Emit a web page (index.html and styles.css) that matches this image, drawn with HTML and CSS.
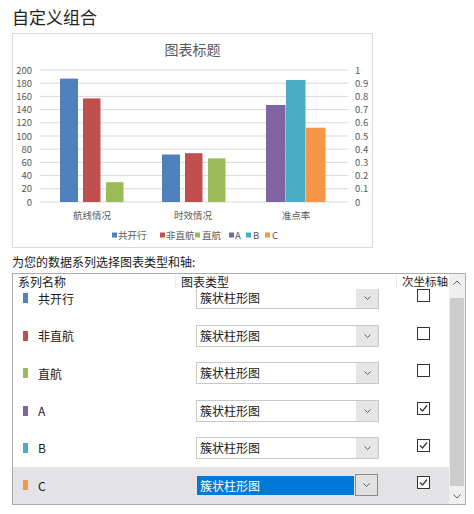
FILE: index.html
```html
<!DOCTYPE html>
<html lang="zh-CN">
<head>
  <meta charset="UTF-8" />
  <title>自定义组合</title>
  <link rel="stylesheet" href="styles.css">
</head>
<body>
  <h1 class="title">自定义组合</h1>

  <div class="chart">
    <svg width="359" height="213" viewBox="0 0 359 213">
      <text class="chart-title" x="179.5" y="21">图表标题</text>

      <g class="grid">
        <line x1="27" x2="335" y1="36" y2="36" />
        <line x1="27" x2="335" y1="49.2" y2="49.2" />
        <line x1="27" x2="335" y1="62.4" y2="62.4" />
        <line x1="27" x2="335" y1="75.6" y2="75.6" />
        <line x1="27" x2="335" y1="88.8" y2="88.8" />
        <line x1="27" x2="335" y1="102" y2="102" />
        <line x1="27" x2="335" y1="115.2" y2="115.2" />
        <line x1="27" x2="335" y1="128.4" y2="128.4" />
        <line x1="27" x2="335" y1="141.6" y2="141.6" />
        <line x1="27" x2="335" y1="154.8" y2="154.8" />
        <line x1="27" x2="335" y1="168" y2="168" />
      </g>

      <g class="axis-left">
        <text x="19" y="39.5">200</text>
        <text x="19" y="52.7">180</text>
        <text x="19" y="65.9">160</text>
        <text x="19" y="79.1">140</text>
        <text x="19" y="92.3">120</text>
        <text x="19" y="105.5">100</text>
        <text x="19" y="118.7">80</text>
        <text x="19" y="131.9">60</text>
        <text x="19" y="145.1">40</text>
        <text x="19" y="158.3">20</text>
        <text x="19" y="171.5">0</text>
      </g>

      <g class="axis-right">
        <text x="342" y="39.5">1</text>
        <text x="342" y="52.7">0.9</text>
        <text x="342" y="65.9">0.8</text>
        <text x="342" y="79.1">0.7</text>
        <text x="342" y="92.3">0.6</text>
        <text x="342" y="105.5">0.5</text>
        <text x="342" y="118.7">0.4</text>
        <text x="342" y="131.9">0.3</text>
        <text x="342" y="145.1">0.2</text>
        <text x="342" y="158.3">0.1</text>
        <text x="342" y="171.5">0</text>
      </g>

      <!-- 航线情况 -->
      <rect class="c-blue" x="47" y="44.6" width="18" height="123.4" />
      <rect class="c-red" x="70" y="64.4" width="17.5" height="103.6" />
      <rect class="c-green" x="93" y="148.2" width="17.5" height="19.8" />
      <!-- 时效情况 -->
      <rect class="c-blue" x="149" y="120.5" width="18" height="47.5" />
      <rect class="c-red" x="172" y="119.2" width="17.5" height="48.8" />
      <rect class="c-green" x="195" y="124.4" width="17.5" height="43.6" />
      <!-- 准点率 (secondary axis) -->
      <rect class="c-purple" x="253" y="71" width="19.5" height="97" />
      <rect class="c-cyan" x="273" y="46" width="19.5" height="122" />
      <rect class="c-orange" x="293" y="93.7" width="19.5" height="74.3" />

      <g class="category">
        <text x="79" y="185">航线情况</text>
        <text x="180" y="185">时效情况</text>
        <text x="283" y="185">准点率</text>
      </g>

      <g class="legend">
        <rect class="c-blue" x="99" y="198.5" width="5" height="5" />
        <text x="105" y="205">共开行</text>
        <rect class="c-red" x="147" y="198.5" width="5" height="5" />
        <text x="153" y="205">非直航</text>
        <rect class="c-green" x="182" y="198.5" width="5" height="5" />
        <text x="189" y="205">直航</text>
        <rect class="c-purple" x="216" y="198.5" width="5" height="5" />
        <text x="222" y="205">A</text>
        <rect class="c-cyan" x="233" y="198.5" width="5" height="5" />
        <text x="240" y="205">B</text>
        <rect class="c-orange" x="252" y="198.5" width="5" height="5" />
        <text x="259" y="205">C</text>
      </g>
    </svg>
  </div>

  <p class="prompt">为您的数据系列选择图表类型和轴:</p>

  <div class="series">
    <div class="series-main">
      <div class="series-head">
        <span class="head-name">系列名称</span>
        <span class="head-type">图表类型</span>
        <span class="head-axis">次坐标轴</span>
      </div>

      <div class="series-list">
        <div class="series-row">
          <div class="name"><span class="swatch c-blue"></span>共开行</div>
          <div class="dropdown"><span class="field">簇状柱形图</span><span class="drop-btn"><svg width="7" height="4"><polyline points="0.5,0.5 3.5,3.5 6.5,0.5" /></svg></span></div>
          <div class="axis"><span class="checkbox"></span></div>
        </div>
        <div class="series-row">
          <div class="name"><span class="swatch c-red"></span>非直航</div>
          <div class="dropdown"><span class="field">簇状柱形图</span><span class="drop-btn"><svg width="7" height="4"><polyline points="0.5,0.5 3.5,3.5 6.5,0.5" /></svg></span></div>
          <div class="axis"><span class="checkbox"></span></div>
        </div>
        <div class="series-row">
          <div class="name"><span class="swatch c-green"></span>直航</div>
          <div class="dropdown"><span class="field">簇状柱形图</span><span class="drop-btn"><svg width="7" height="4"><polyline points="0.5,0.5 3.5,3.5 6.5,0.5" /></svg></span></div>
          <div class="axis"><span class="checkbox"></span></div>
        </div>
        <div class="series-row">
          <div class="name"><span class="swatch c-purple"></span>A</div>
          <div class="dropdown"><span class="field">簇状柱形图</span><span class="drop-btn"><svg width="7" height="4"><polyline points="0.5,0.5 3.5,3.5 6.5,0.5" /></svg></span></div>
          <div class="axis"><span class="checkbox"><svg width="11" height="11"><polyline points="2,5.5 4.5,8 9,2.5" /></svg></span></div>
        </div>
        <div class="series-row">
          <div class="name"><span class="swatch c-cyan"></span>B</div>
          <div class="dropdown"><span class="field">簇状柱形图</span><span class="drop-btn"><svg width="7" height="4"><polyline points="0.5,0.5 3.5,3.5 6.5,0.5" /></svg></span></div>
          <div class="axis"><span class="checkbox"><svg width="11" height="11"><polyline points="2,5.5 4.5,8 9,2.5" /></svg></span></div>
        </div>
        <div class="series-row selected">
          <div class="name"><span class="swatch c-orange"></span>C</div>
          <div class="dropdown"><span class="field">簇状柱形图</span><span class="drop-btn"><svg width="7" height="4"><polyline points="0.5,0.5 3.5,3.5 6.5,0.5" /></svg></span></div>
          <div class="axis"><span class="checkbox"><svg width="11" height="11"><polyline points="2,5.5 4.5,8 9,2.5" /></svg></span></div>
        </div>
      </div>
    </div>

    <div class="scrollbar">
      <span class="scroll-arrow"><svg width="8" height="5"><polyline points="0.5,4.5 4,1 7.5,4.5" /></svg></span>
      <div class="scroll-track"><div class="scroll-thumb"></div></div>
      <span class="scroll-arrow"><svg width="8" height="5"><polyline points="0.5,0.5 4,4 7.5,0.5" /></svg></span>
    </div>
  </div>
</body>
</html>
```

FILE: styles.css
```css
body {
  margin: 0;
  padding: 0 0 0 12px;
  background: #fff;
  color: #1a1a1a;
  font-family: 'Noto Sans CJK SC', 'Noto Sans', sans-serif;
}

.title {
  margin: 5px 0 4px;
  font-size: 17px;
  line-height: 24px;
  font-weight: 400;
  color: #222;
}

/* chart */
.chart {
  width: 359px;
  height: 213px;
  border: 1px solid #d9d9d9;
}

.chart svg {
  display: block;
  font-family: 'Noto Sans CJK SC', 'Noto Sans', sans-serif;
}

.chart-title {
  font-size: 14px;
  fill: #595959;
  text-anchor: middle;
}

.grid line {
  stroke: #d9d9d9;
  stroke-width: 1;
}

.axis-left text,
.axis-right text {
  font-size: 9.5px;
  fill: #595959;
}

.axis-left text {
  text-anchor: end;
}

.category text {
  font-size: 9.5px;
  fill: #595959;
  text-anchor: middle;
}

.legend text {
  font-size: 9.5px;
  fill: #595959;
}

.c-blue { fill: #4f81bd; background: #4f81bd; }
.c-red { fill: #c0504d; background: #c0504d; }
.c-green { fill: #9bbb59; background: #9bbb59; }
.c-purple { fill: #8064a2; background: #8064a2; }
.c-cyan { fill: #4bacc6; background: #4bacc6; }
.c-orange { fill: #f79646; background: #f79646; }

.prompt {
  margin: 6px 0 3px;
  font-size: 12px;
  line-height: 16px;
}

/* series table */
.series {
  display: flex;
  width: 452px;
  height: 230px;
  border: 1px solid #acacac;
  font-size: 12px;
}

.series-main {
  flex: 1;
  display: flex;
  flex-direction: column;
  min-width: 0;
}

.series-head {
  display: grid;
  grid-template-columns: 163px 221px 1fr;
  height: 15px;
  line-height: 15px;
  background: #fff;
  white-space: nowrap;
}

.series-head span {
  padding-left: 5px;
}

.head-axis {
  font-size: 11.5px;
}

.head-name,
.head-type {
  border-right: 1px solid #ececec;
}

.series-list {
  flex: 1;
  display: flex;
  flex-direction: column;
  justify-content: flex-end;
  overflow: hidden;
}

.series-row {
  flex: none;
  display: grid;
  grid-template-columns: 183px 183px 1fr;
  align-items: center;
  height: 37.4px;
}

.series-row.selected {
  background: #e3e3e6;
}

.name {
  display: flex;
  align-items: center;
  gap: 10px;
  padding-left: 10px;
}

.swatch {
  width: 5px;
  height: 10px;
}

.dropdown {
  display: flex;
  height: 22px;
  box-sizing: border-box;
  border: 1px solid #c8c8c8;
  background: #fff;
}

.field {
  flex: 1;
  padding-left: 3px;
  line-height: 20px;
}

.drop-btn {
  width: 22px;
  display: flex;
  align-items: center;
  justify-content: center;
  background: #e6e6e6;
  box-sizing: border-box;
}

.drop-btn svg polyline,
.scroll-arrow svg polyline {
  fill: none;
  stroke: #606060;
  stroke-width: 1;
}

.selected .dropdown {
  border-color: transparent;
  background: transparent;
}

.selected .field {
  background: #0078d7;
  color: #fff;
  margin: 1px 1px 0 0;
  line-height: 19px;
}

.selected .drop-btn {
  border: 1px solid #8a8a8a;
  background: #e1e1e1;
  margin: -1px 0 -1px 0;
  width: 23px;
}

.axis {
  padding-left: 38px;
  display: flex;
}

.checkbox {
  width: 13px;
  height: 13px;
  box-sizing: border-box;
  border: 1px solid #333;
  background: #fff;
  margin-bottom: 5px;
  display: flex;
  align-items: center;
  justify-content: center;
}

.checkbox svg polyline {
  fill: none;
  stroke: #333;
  stroke-width: 1.2;
}

/* scrollbar */
.scrollbar {
  width: 16px;
  display: flex;
  flex-direction: column;
  background: #f0f0f0;
}

.scroll-arrow {
  height: 16px;
  display: flex;
  align-items: center;
  justify-content: center;
}

.scroll-track {
  flex: 1;
  padding: 8px 1px 2px;
  display: flex;
}

.scroll-thumb {
  flex: 1;
  background: #cdcdcd;
}
```
